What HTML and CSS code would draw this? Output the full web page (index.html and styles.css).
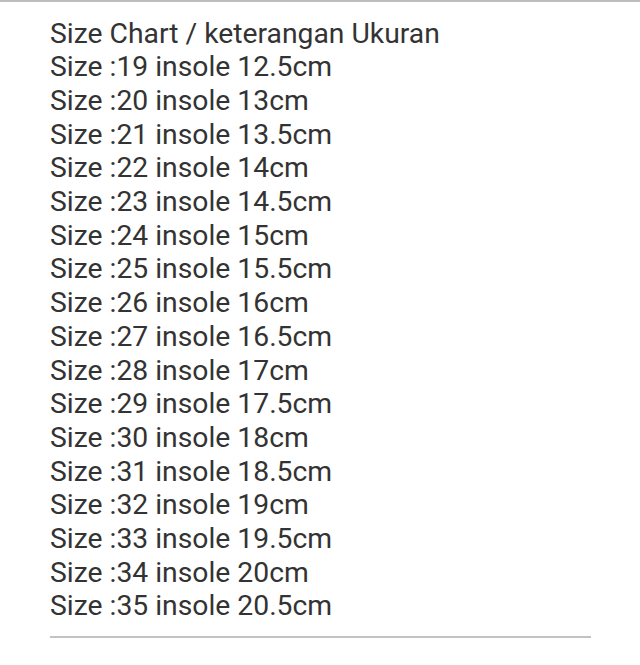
FILE: index.html
```html
<!DOCTYPE html>
<html>
<head>
<meta charset="utf-8">
<link rel="stylesheet" href="styles.css">
</head>
<body>
<div class="page">
  <div class="chart">
    <div class="line">Size Chart / keterangan Ukuran</div>
    <div class="line">Size :19 insole 12.5cm</div>
    <div class="line">Size :20 insole 13cm</div>
    <div class="line">Size :21 insole 13.5cm</div>
    <div class="line">Size :22 insole 14cm</div>
    <div class="line">Size :23 insole 14.5cm</div>
    <div class="line">Size :24 insole 15cm</div>
    <div class="line">Size :25 insole 15.5cm</div>
    <div class="line">Size :26 insole 16cm</div>
    <div class="line">Size :27 insole 16.5cm</div>
    <div class="line">Size :28 insole 17cm</div>
    <div class="line">Size :29 insole 17.5cm</div>
    <div class="line">Size :30 insole 18cm</div>
    <div class="line">Size :31 insole 18.5cm</div>
    <div class="line">Size :32 insole 19cm</div>
    <div class="line">Size :33 insole 19.5cm</div>
    <div class="line">Size :34 insole 20cm</div>
    <div class="line">Size :35 insole 20.5cm</div>
  </div>
  <div class="rule"></div>
</div>
</body>
</html>
```
FILE: styles.css
```css
html, body {
  margin: 0;
  padding: 0;
  background: #ffffff;
}
.page {
  width: 640px;
  height: 665px;
  box-sizing: border-box;
  border-top: 2px solid #bdbdbd;
  padding: 14.5px 0 0 50px;
  font-family: Roboto, "Noto Sans", sans-serif;
  color: #333333;
}
.chart {
  font-size: 28.3px;
  line-height: 33.7px;
  white-space: nowrap;
}
.rule {
  margin-top: 13px;
  width: 541px;
  height: 2px;
  background: #c2c2c2;
}
```
